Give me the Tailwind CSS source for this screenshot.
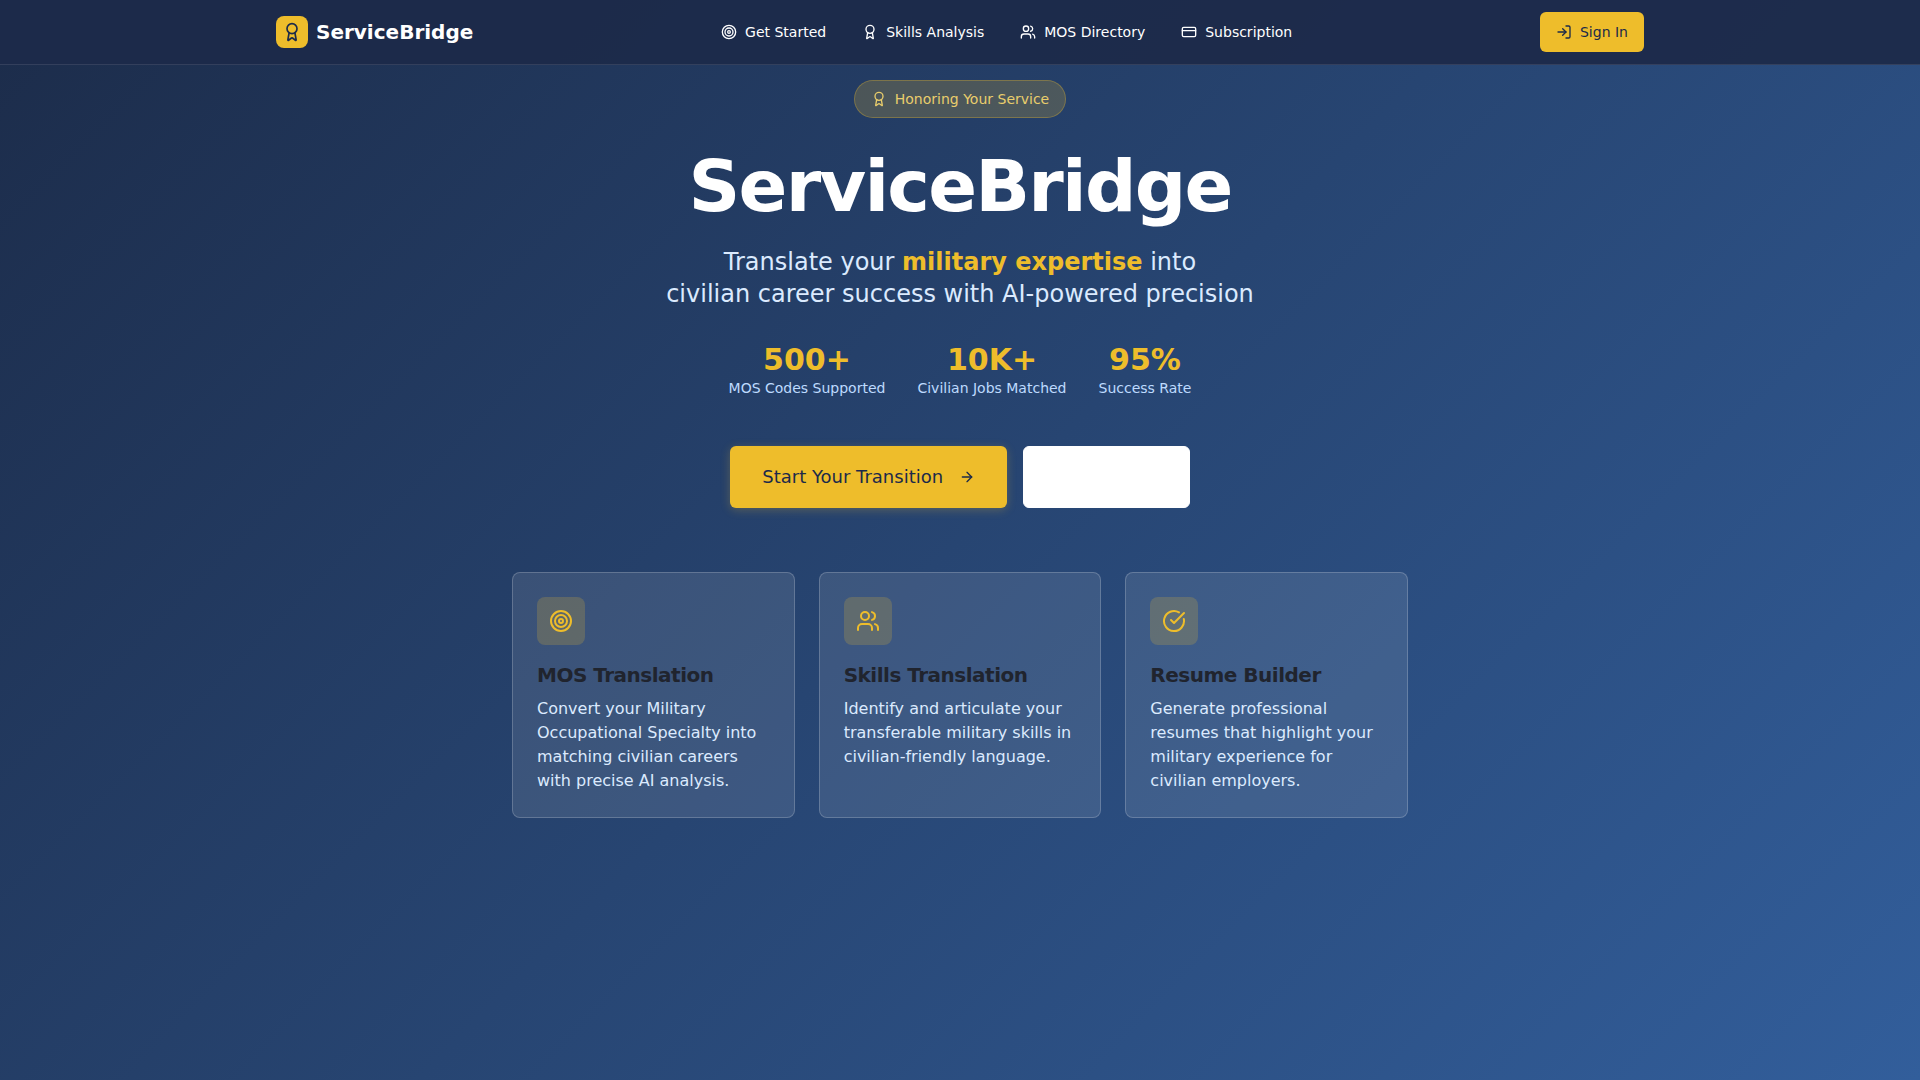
<!DOCTYPE html>
<html lang="en">
<head>
  <meta charset="UTF-8" />
  <meta name="viewport" content="width=device-width, initial-scale=1.0" />
  <title>ServiceBridge</title>
  <script src="https://cdn.jsdelivr.net/npm/@tailwindcss/browser@4"></script>
</head>
<body class="min-h-screen font-['DejaVu_Sans',sans-serif] text-white bg-linear-135 from-[#1c2c4a] via-[#274572] to-[#325e9b]">
  <!-- Icons -->
  <svg class="hidden" aria-hidden="true">
    <symbol id="award" viewBox="0 0 24 24">
      <path d="m15.477 12.89 1.515 8.526a.5.5 0 0 1-.81.47l-3.58-2.687a1 1 0 0 0-1.197 0l-3.586 2.686a.5.5 0 0 1-.81-.469l1.514-8.526" />
      <circle cx="12" cy="8" r="6" />
    </symbol>
    <symbol id="target" viewBox="0 0 24 24">
      <circle cx="12" cy="12" r="10" /><circle cx="12" cy="12" r="6" /><circle cx="12" cy="12" r="2" />
    </symbol>
    <symbol id="users" viewBox="0 0 24 24">
      <path d="M16 21v-2a4 4 0 0 0-4-4H6a4 4 0 0 0-4 4v2" /><circle cx="9" cy="7" r="4" />
      <path d="M22 21v-2a4 4 0 0 0-3-3.87" /><path d="M16 3.13a4 4 0 0 1 0 7.75" />
    </symbol>
    <symbol id="card" viewBox="0 0 24 24">
      <rect width="20" height="14" x="2" y="5" rx="2" /><path d="M2 10h20" />
    </symbol>
    <symbol id="login" viewBox="0 0 24 24">
      <path d="M15 3h4a2 2 0 0 1 2 2v14a2 2 0 0 1-2 2h-4" /><path d="m10 17 5-5-5-5" /><path d="M15 12H3" />
    </symbol>
    <symbol id="arrow" viewBox="0 0 24 24">
      <path d="M5 12h14" /><path d="m12 5 7 7-7 7" />
    </symbol>
    <symbol id="check" viewBox="0 0 24 24">
      <path d="M21.801 10A10 10 0 1 1 17 3.335" /><path d="m9 11 3 3L22 4" />
    </symbol>
  </svg>

  <header class="-mb-px bg-[#1c2a4a]/95 border-b border-white/10">
    <div class="max-w-[1400px] mx-auto px-4 h-16 flex items-center justify-between">
      <a href="#" class="flex items-center gap-2">
        <span class="w-8 h-8 rounded-lg bg-[#eebd2b] text-[#1c2a4a] flex items-center justify-center">
          <svg class="w-5 h-5 fill-none stroke-current stroke-2 [stroke-linecap:round] [stroke-linejoin:round]"><use href="#award" /></svg>
        </span>
        <span class="text-xl font-bold">ServiceBridge</span>
      </a>

      <nav class="flex items-center gap-1 text-sm">
        <a href="#" class="flex items-center gap-2 px-4 py-2"><svg class="w-4 h-4 fill-none stroke-current stroke-2 [stroke-linecap:round] [stroke-linejoin:round]"><use href="#target" /></svg>Get Started</a>
        <a href="#" class="flex items-center gap-2 px-4 py-2"><svg class="w-4 h-4 fill-none stroke-current stroke-2 [stroke-linecap:round] [stroke-linejoin:round]"><use href="#award" /></svg>Skills Analysis</a>
        <a href="#" class="flex items-center gap-2 px-4 py-2"><svg class="w-4 h-4 fill-none stroke-current stroke-2 [stroke-linecap:round] [stroke-linejoin:round]"><use href="#users" /></svg>MOS Directory</a>
        <a href="#" class="flex items-center gap-2 px-4 py-2"><svg class="w-4 h-4 fill-none stroke-current stroke-2 [stroke-linecap:round] [stroke-linejoin:round]"><use href="#card" /></svg>Subscription</a>
      </nav>

      <button class="flex items-center gap-2 h-10 px-4 rounded-md bg-[#eebd2b] text-[#1c2a4a] text-sm">
        <svg class="w-4 h-4 fill-none stroke-current stroke-2 [stroke-linecap:round] [stroke-linejoin:round]"><use href="#login" /></svg>
        Sign In
      </button>
    </div>
  </header>

  <main class="max-w-4xl mx-auto pt-4 pb-16 text-center">
    <div class="inline-flex items-center gap-2 px-4 py-2 rounded-full bg-[#eebd2b]/20 border border-[#eebd2b]/30 text-[#e9cd6c] text-sm">
      <svg class="w-4 h-4 fill-none stroke-current stroke-2 [stroke-linecap:round] [stroke-linejoin:round]"><use href="#award" /></svg>
      Honoring Your Service
    </div>

    <h1 class="mt-8 text-7xl leading-none font-bold tracking-tight">ServiceBridge</h1>
    <p class="mt-6 text-2xl text-blue-100">
      Translate your <strong class="font-semibold text-[#eebd2b]">military expertise</strong> into<br />
      civilian career success with AI-powered precision
    </p>

    <div class="mt-8 flex justify-center gap-8">
      <div><div class="text-3xl font-bold text-[#eebd2b]">500+</div><div class="text-sm text-blue-200">MOS Codes Supported</div></div>
      <div><div class="text-3xl font-bold text-[#eebd2b]">10K+</div><div class="text-sm text-blue-200">Civilian Jobs Matched</div></div>
      <div><div class="text-3xl font-bold text-[#eebd2b]">95%</div><div class="text-sm text-blue-200">Success Rate</div></div>
    </div>

    <div class="mt-12 flex justify-center gap-4 text-lg">
      <button class="flex items-center gap-4 px-8 py-4 rounded-md bg-[#eebd2b] text-[#1c2a4a] shadow-[0_2px_10px_rgba(238,189,43,0.25)]">
        Start Your Transition
        <svg class="w-4 h-4 fill-none stroke-current stroke-2 [stroke-linecap:round] [stroke-linejoin:round]"><use href="#arrow" /></svg>
      </button>
      <button class="px-8 py-4 rounded-md border border-white bg-white text-white">Learn More</button>
    </div>

    <div class="mt-16 grid grid-cols-3 gap-6 text-left">
      <div class="p-6 rounded-lg bg-white/10 border border-white/20">
        <div class="w-12 h-12 mb-4 rounded-lg bg-[#eebd2b]/20 text-[#eebd2b] flex items-center justify-center">
          <svg class="w-6 h-6 fill-none stroke-current stroke-2 [stroke-linecap:round] [stroke-linejoin:round]"><use href="#target" /></svg>
        </div>
        <h3 class="mb-2 text-xl font-semibold tracking-tight text-[#20242e]">MOS Translation</h3>
        <p class="text-blue-100">Convert your Military Occupational Specialty into matching civilian careers with precise AI analysis.</p>
      </div>
      <div class="p-6 rounded-lg bg-white/10 border border-white/20">
        <div class="w-12 h-12 mb-4 rounded-lg bg-[#eebd2b]/20 text-[#eebd2b] flex items-center justify-center">
          <svg class="w-6 h-6 fill-none stroke-current stroke-2 [stroke-linecap:round] [stroke-linejoin:round]"><use href="#users" /></svg>
        </div>
        <h3 class="mb-2 text-xl font-semibold tracking-tight text-[#20242e]">Skills Translation</h3>
        <p class="text-blue-100">Identify and articulate your transferable military skills in civilian-friendly language.</p>
      </div>
      <div class="p-6 rounded-lg bg-white/10 border border-white/20">
        <div class="w-12 h-12 mb-4 rounded-lg bg-[#eebd2b]/20 text-[#eebd2b] flex items-center justify-center">
          <svg class="w-6 h-6 fill-none stroke-current stroke-2 [stroke-linecap:round] [stroke-linejoin:round]"><use href="#check" /></svg>
        </div>
        <h3 class="mb-2 text-xl font-semibold tracking-tight text-[#20242e]">Resume Builder</h3>
        <p class="text-blue-100">Generate professional resumes that highlight your military experience for civilian employers.</p>
      </div>
    </div>
  </main>
</body>
</html>
